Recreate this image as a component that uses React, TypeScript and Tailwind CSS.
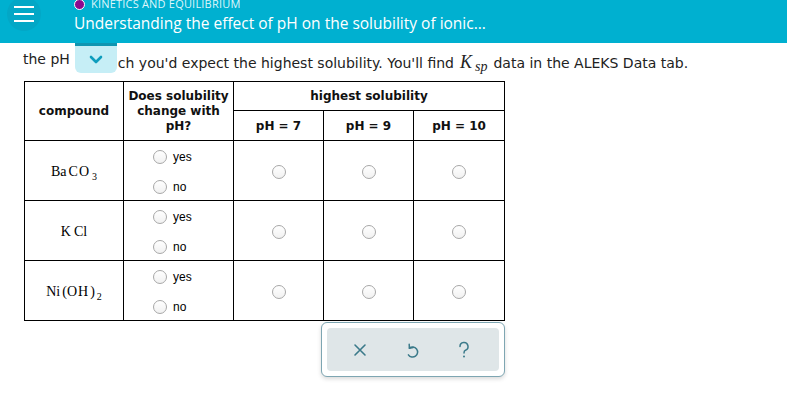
import React from 'react';

function Radio() {
  return (
    <span className="inline-block w-[14px] h-[14px] rounded-full border border-[#a8a8a8] bg-gradient-to-b from-white to-[#f1f1f1] shrink-0" />
  );
}

function Formula({ children }: { children: React.ReactNode }) {
  return (
    <span className="text-[14px] text-black" style={{ fontFamily: '"Liberation Serif", "Times New Roman", serif' }}>
      {children}
    </span>
  );
}

const rows = [
  {
    id: 'baco3',
    formula: (
      <>
        Ba<span className="ml-[2px]">C</span>
        <span className="ml-[1px]">O</span>
        <sub className="text-[10px] ml-[3px] relative top-[4px]">3</sub>
      </>
    ),
  },
  {
    id: 'kcl',
    formula: (
      <>
        K<span className="ml-[3px]">Cl</span>
      </>
    ),
  },
  {
    id: 'nioh2',
    formula: (
      <>
        Ni<span className="ml-[2px]">(</span>O<span className="ml-[1px]">H</span>
        <span className="ml-[2px]">)</span>
        <sub className="text-[10px] ml-[2px] relative top-[4px]">2</sub>
      </>
    ),
  },
];

export default function App() {
  const verdana = { fontFamily: '"DejaVu Sans", Verdana, sans-serif' };
  const arial = { fontFamily: '"Liberation Sans", Arial, sans-serif' };

  return (
    <div className="w-[787px] h-[414px] bg-white overflow-hidden relative">
      {/* Top bar */}
      <div className="h-[43px] bg-[#00b0d0] flex items-start relative" style={{ fontFamily: '"Open Sans", Lato, sans-serif' }}>
        <div className="w-[34px] h-[34px] rounded-full bg-[#03a7c6] ml-[7px] mt-[-3px] flex flex-col items-center justify-center gap-[5px]">
          <span className="block w-[20px] h-[2px] bg-white" />
          <span className="block w-[20px] h-[2px] bg-white" />
          <span className="block w-[20px] h-[2px] bg-white" />
        </div>
        <div className="ml-[33px] flex flex-col">
          <div className="flex items-center gap-[6px] mt-[-4px] h-[16px]">
            <span className="w-[11px] h-[11px] rounded-full bg-[#8a0a8e] border border-white" />
            <span className="text-[11px] text-[#dff6fb] tracking-[0.2px]">KINETICS AND EQUILIBRIUM</span>
          </div>
          <div className="text-[15.5px] text-white leading-[20px] mt-[1px]">
            Understanding the effect of pH on the solubility of ionic...
          </div>
        </div>
      </div>

      {/* Question line */}
      <div className="flex items-start pl-[23px] text-[14px] text-[#222]" style={verdana}>
        <span className="mt-[6px]">the pH</span>
        <div className="ml-[5px] w-[42px] h-[30px] bg-[#c6eef6] rounded-b-[6px] border-t-[3px] border-[#0f95b1] flex items-center justify-center">
          <svg width="14" height="10" viewBox="0 0 14 10">
            <path d="M2 2 L7 7 L12 2" fill="none" stroke="#0e9dbd" strokeWidth="2.6" strokeLinecap="round" strokeLinejoin="round" />
          </svg>
        </div>
        <span className="mt-[6px] ml-[1px] flex items-baseline">
          ch you'd expect the highest solubility. You'll find
          <span className="ml-[6px] italic text-[18px]" style={{ fontFamily: '"Liberation Serif", "Times New Roman", serif' }}>
            K
            <sub className="text-[14px] ml-[3px] relative top-[3px]">sp</sub>
          </span>
          <span className="ml-[6px]">data in the ALEKS Data tab.</span>
        </span>
      </div>

      {/* Table */}
      <div className="pl-[24px] mt-[5px]">
        <table className="border-collapse text-[#111]" style={verdana}>
          <thead>
            <tr className="h-[29px]">
              <th rowSpan={2} className="border border-black w-[99px] text-[12px] font-bold align-middle">compound</th>
              <th rowSpan={2} className="border border-black w-[110px] text-[12px] font-bold leading-[15px] align-middle">
                Does solubility
                <br />
                change with
                <br />
                pH?
              </th>
              <th colSpan={3} className="border border-black text-[12px] font-bold">highest solubility</th>
            </tr>
            <tr className="h-[30px]">
              <th className="border border-black w-[90px] text-[12px] font-bold">pH = 7</th>
              <th className="border border-black w-[90px] text-[12px] font-bold">pH = 9</th>
              <th className="border border-black w-[91px] text-[12px] font-bold">pH = 10</th>
            </tr>
          </thead>
          <tbody>
            {rows.map((r) => (
              <tr key={r.id} className="h-[60px]">
                <td className="border border-black text-center align-middle">
                  <Formula>{r.formula}</Formula>
                </td>
                <td className="border border-black align-top">
                  <div className="flex flex-col pl-[29px] pt-[9px] gap-[16px] text-[12px] text-black" style={arial}>
                    <label className="flex items-center gap-[6px] h-[14px]">
                      <Radio />
                      <span>yes</span>
                    </label>
                    <label className="flex items-center gap-[6px] h-[14px]">
                      <Radio />
                      <span>no</span>
                    </label>
                  </div>
                </td>
                {[0, 1, 2].map((c) => (
                  <td key={c} className="border border-black align-middle">
                    <div className="flex justify-center pt-[2px]">
                      <Radio />
                    </div>
                  </td>
                ))}
              </tr>
            ))}
          </tbody>
        </table>
      </div>

      {/* Action buttons */}
      <div className="pl-[321px] mt-[1px]">
        <div className="w-[184px] h-[55px] rounded-[6px] border border-[#7ea6b2] bg-white shadow-[0_2px_4px_rgba(0,0,0,0.15)] p-[5px]">
          <div className="h-full rounded-[4px] bg-[#dfe6e8] flex items-center justify-center gap-[30px] pr-[2px] text-[#3b7a8a]">
            <svg width="22" height="22" viewBox="0 0 22 22">
              <path d="M6 6 L16 16 M16 6 L6 16" stroke="#3b7a8a" strokeWidth="1.6" strokeLinecap="round" />
            </svg>
            <svg width="22" height="22" viewBox="0 0 22 22">
              <path d="M8.4 9.2 A5 5 0 1 1 7.4 15.8" fill="none" stroke="#3b7a8a" strokeWidth="1.5" strokeLinecap="round" />
              <path d="M8.2 5.2 L8.4 9.2 L12.2 8.4" fill="none" stroke="#3b7a8a" strokeWidth="1.5" strokeLinecap="round" strokeLinejoin="round" />
            </svg>
            <svg width="22" height="22" viewBox="0 0 22 22">
              <path d="M7 7.5 A4 4 0 1 1 12.5 11.2 Q11 12 11 14" fill="none" stroke="#3b7a8a" strokeWidth="1.5" strokeLinecap="round" />
              <circle cx="11" cy="17.6" r="1" fill="#3b7a8a" />
            </svg>
          </div>
        </div>
      </div>
    </div>
  );
}
